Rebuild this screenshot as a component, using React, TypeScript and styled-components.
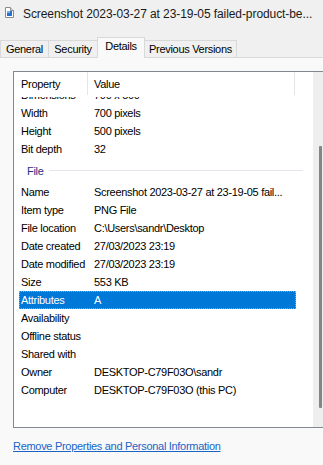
import React from 'react';
import styled, { createGlobalStyle, css } from 'styled-components';

const GlobalStyle = createGlobalStyle`
  html, body {
    margin: 0;
    padding: 0;
    background: #f0f0f0;
    font-family: "Liberation Sans", Arial, sans-serif;
    color: #000;
    overflow: hidden;
  }
`;

const Window = styled.div`
  width: 323px;
  height: 465px;
  display: flex;
  flex-direction: column;
  overflow: hidden;
`;

const TitleBar = styled.div`
  height: 37px;
  box-sizing: border-box;
  padding: 7px 5px 0;
  display: flex;
  align-items: flex-start;
  gap: 9px;
`;

const TitleText = styled.div`
  font-size: 12px;
  line-height: 14px;
  letter-spacing: -0.08px;
  white-space: nowrap;
  color: #1a1a1a;
`;

const TabStrip = styled.div`
  display: flex;
  align-items: flex-end;
  height: 20px;
  border-bottom: 1px solid #d9d9d9;
`;

const Tab = styled.div<{ $selected?: boolean; $width: number }>`
  width: ${(p) => p.$width}px;
  box-sizing: border-box;
  height: 17px;
  margin-left: -1px;
  border: 1px solid #d9d9d9;
  border-bottom: none;
  background: #f0f0f0;
  font-size: 11px;
  line-height: 16px;
  letter-spacing: -0.3px;
  text-align: center;
  white-space: nowrap;
  &:first-child {
    margin-left: 0;
  }
  ${(p) =>
    p.$selected &&
    css`
      position: relative;
      z-index: 1;
      height: 21px;
      margin-bottom: -1px;
      background: #f9f9f9;
      line-height: 17px;
    `}
`;

const Page = styled.div`
  flex: 1;
  background: #f9f9f9;
  padding: 13px 0 0 13px;
  display: flex;
  flex-direction: column;
`;

const ListBox = styled.div`
  width: 311px;
  height: 357px;
  box-sizing: border-box;
  border: 1px solid #828790;
  background: #fff;
  display: flex;
  flex-shrink: 0;
`;

const ListMain = styled.div`
  flex: 1;
  display: flex;
  flex-direction: column;
  overflow: hidden;
`;

const HeaderRow = styled.div`
  height: 25px;
  display: flex;
  position: relative;
  z-index: 1;
  background: #fff;
  flex-shrink: 0;
`;

const HeaderCell = styled.div<{ $width: number; $pad: number }>`
  width: ${(p) => p.$width}px;
  box-sizing: border-box;
  padding-left: ${(p) => p.$pad}px;
  font-size: 11px;
  line-height: 25px;
  letter-spacing: -0.3px;
  border-right: 1px solid #e5e5e5;
  height: 23px;
  line-height: 24px;
`;

const Body = styled.div`
  flex: 1;
  overflow: hidden;
  display: flex;
  flex-direction: column;
`;

const Rows = styled.div<{ $offset: number }>`
  margin-top: ${(p) => -p.$offset}px;
  display: flex;
  flex-direction: column;
`;

const Row = styled.div<{ $selected?: boolean }>`
  margin-left: 5px;
  width: 277px;
  height: 18px;
  box-sizing: border-box;
  border: 1px solid transparent;
  display: grid;
  grid-template-columns: 68px 1fr;
  font-size: 11px;
  line-height: 16px;
  letter-spacing: -0.3px;
  white-space: nowrap;
  ${(p) =>
    p.$selected &&
    css`
      background: #0078d7;
      color: #fff;
      border: 1px dotted #e89b4a;
    `}
`;

const NameCell = styled.div`
  padding-left: 1px;
  overflow: hidden;
`;

const ValueCell = styled.div`
  padding-left: 6px;
  overflow: hidden;
`;

const GroupRow = styled.div`
  height: 25px;
  display: flex;
  align-items: center;
  padding-left: 13px;
  padding-right: 10px;
  gap: 5px;
`;

const GroupLabel = styled.span`
  font-size: 11px;
  letter-spacing: -0.3px;
  color: #1e3287;
`;

const GroupLine = styled.div`
  flex: 1;
  height: 1px;
  background: #e2e5ef;
`;

const ScrollTrack = styled.div`
  width: 10px;
  background: #eeeeee;
  display: flex;
  flex-direction: column;
  align-items: flex-end;
  padding-right: 1px;
  box-sizing: border-box;
`;

const ScrollThumb = styled.div`
  width: 3px;
  background: #858585;
  border-radius: 1px;
`;

const RemoveLink = styled.a`
  margin-top: 11px;
  font-size: 11px;
  line-height: 14px;
  letter-spacing: -0.3px;
  color: #1a64c6;
  text-decoration: underline;
  cursor: pointer;
  align-self: flex-start;
`;

const FileIcon = () => (
  <svg width="9" height="11" viewBox="0 0 9 11">
    <path d="M0.5 0.5 H5.5 L8.5 3.5 V10.5 H0.5 Z" fill="#fff" stroke="#8c8c8c" />
    <path d="M5.5 0.5 V3.5 H8.5" fill="#e8e8e8" stroke="#8c8c8c" />
    <rect x="2" y="4" width="5" height="5" fill="#2a6fd0" />
    <rect x="2" y="4" width="3" height="2" fill="#6fb3f0" />
  </svg>
);

type Item =
  | { kind: 'row'; name: string; value?: string; selected?: boolean }
  | { kind: 'group'; label: string };

const items: Item[] = [
  { kind: 'row', name: 'Dimensions', value: '700 x 500' },
  { kind: 'row', name: 'Width', value: '700 pixels' },
  { kind: 'row', name: 'Height', value: '500 pixels' },
  { kind: 'row', name: 'Bit depth', value: '32' },
  { kind: 'group', label: 'File' },
  { kind: 'row', name: 'Name', value: 'Screenshot 2023-03-27 at 23-19-05 fail...' },
  { kind: 'row', name: 'Item type', value: 'PNG File' },
  { kind: 'row', name: 'File location', value: 'C:\\Users\\sandr\\Desktop' },
  { kind: 'row', name: 'Date created', value: '27/03/2023 23:19' },
  { kind: 'row', name: 'Date modified', value: '27/03/2023 23:19' },
  { kind: 'row', name: 'Size', value: '553 KB' },
  { kind: 'row', name: 'Attributes', value: 'A', selected: true },
  { kind: 'row', name: 'Availability' },
  { kind: 'row', name: 'Offline status' },
  { kind: 'row', name: 'Shared with' },
  { kind: 'row', name: 'Owner', value: 'DESKTOP-C79F03O\\sandr' },
  { kind: 'row', name: 'Computer', value: 'DESKTOP-C79F03O (this PC)' },
];

const tabs = [
  { label: 'General', width: 49 },
  { label: 'Security', width: 50 },
  { label: 'Details', width: 48, selected: true },
  { label: 'Previous Versions', width: 93 },
];

export default function App() {
  return (
    <Window>
      <GlobalStyle />
      <TitleBar>
        <FileIcon />
        <TitleText>Screenshot 2023-03-27 at 23-19-05 failed-product-be...</TitleText>
      </TitleBar>
      <TabStrip>
        {tabs.map((t) => (
          <Tab key={t.label} $width={t.width} $selected={t.selected}>
            {t.label}
          </Tab>
        ))}
      </TabStrip>
      <Page>
        <ListBox>
          <ListMain>
            <HeaderRow>
              <HeaderCell $width={74} $pad={7}>Property</HeaderCell>
              <HeaderCell $width={207} $pad={6}>Value</HeaderCell>
            </HeaderRow>
            <Body>
              <Rows $offset={11}>
                {items.map((it, i) =>
                  it.kind === 'group' ? (
                    <GroupRow key={i}>
                      <GroupLabel>{it.label}</GroupLabel>
                      <GroupLine />
                    </GroupRow>
                  ) : (
                    <Row key={i} $selected={it.selected}>
                      <NameCell>{it.name}</NameCell>
                      <ValueCell>{it.value}</ValueCell>
                    </Row>
                  ),
                )}
              </Rows>
            </Body>
          </ListMain>
          <ScrollTrack>
            <ScrollThumb style={{ marginTop: 74, height: 262 }} />
          </ScrollTrack>
        </ListBox>
        <RemoveLink>Remove Properties and Personal Information</RemoveLink>
      </Page>
    </Window>
  );
}
